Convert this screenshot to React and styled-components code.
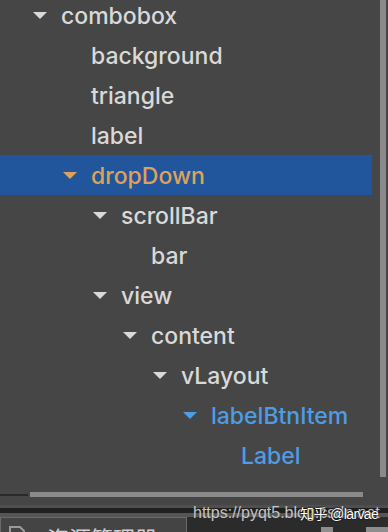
import React from "react";
import styled, { createGlobalStyle } from "styled-components";

const GlobalStyle = createGlobalStyle`
  html, body {
    margin: 0;
    padding: 0;
    background: #464646;
    overflow: hidden;
  }
`;

const nodes = [
  { name: "combobox", depth: 0, open: true },
  { name: "background", depth: 1 },
  { name: "triangle", depth: 1 },
  { name: "label", depth: 1 },
  { name: "dropDown", depth: 1, open: true, tone: "orange", selected: true },
  { name: "scrollBar", depth: 2, open: true },
  { name: "bar", depth: 3 },
  { name: "view", depth: 2, open: true },
  { name: "content", depth: 3, open: true },
  { name: "vLayout", depth: 4, open: true },
  { name: "labelBtnItem", depth: 5, open: true, tone: "blue" },
  { name: "Label", depth: 6, tone: "blue" }
];

const tones = {
  normal: "#d9d9d9",
  orange: "#dfa15a",
  blue: "#4d9de6"
};

const Page = styled.div`
  width: 388px;
  height: 532px;
  display: flex;
  flex-direction: column;
  background: #464646;
  position: relative;
  overflow: hidden;
`;

const Viewport = styled.div`
  height: 484px;
  flex-shrink: 0;
  display: flex;
  overflow: hidden;
`;

const TreeList = styled.ul`
  width: 372px;
  margin: -5px 0 0;
  padding: 0;
  list-style: none;
`;

const Row = styled.li`
  height: 40px;
  display: flex;
  align-items: center;
  padding-left: ${(p) => 33 + p.$depth * 30}px;
  background: ${(p) => (p.$selected ? "#21569c" : "transparent")};
  color: ${(p) => tones[p.$tone || "normal"]};
  font-family: Inter, "Liberation Sans", sans-serif;
  font-size: 23px;
  font-weight: 500;
`;

const Label = styled.span`
  margin-top: 2px;
`;

const ArrowSlot = styled.span`
  width: 14px;
  margin-right: 14px;
  display: flex;
  justify-content: center;
  align-items: center;
`;

const Arrow = styled.span`
  width: 0;
  height: 0;
  border-left: 7px solid transparent;
  border-right: 7px solid transparent;
  border-top: 7px solid ${(p) => tones[p.$tone || "normal"]};
`;

const Gutter = styled.div`
  flex: 1;
  display: flex;
  justify-content: flex-end;
`;

const VScroll = styled.div`
  width: 6px;
  height: 477px;
  margin-right: 2px;
  background: #8a8a8a;
`;

const HScrollArea = styled.div`
  height: 21px;
  flex-shrink: 0;
  display: flex;
  align-items: flex-start;
  padding-top: 8px;
  box-sizing: border-box;
`;

const HTrack = styled.div`
  width: 28px;
  height: 2px;
  margin-top: 2px;
  background: #2a2a2a;
`;

const HThumb = styled.div`
  margin-left: 2px;
  width: 333px;
  height: 5px;
  background: #8a8a8a;
`;

const Divider = styled.div`
  height: ${(p) => p.$h}px;
  flex-shrink: 0;
  background: ${(p) => p.$c};
`;

const TabBar = styled.div`
  flex: 1;
  min-height: 0;
  display: flex;
  background: #2b2b2b;
  overflow: hidden;
`;

const Tab = styled.div`
  width: 187px;
  flex-shrink: 0;
  border: 1px solid #6a6a6a;
  border-bottom: none;
  background: #444444;
  display: flex;
  align-items: flex-start;
  gap: 22px;
  padding: 8px 0 0 8px;
  box-sizing: border-box;
`;

const TabText = styled.span`
  font-family: "Noto Sans CJK SC", "Liberation Sans", sans-serif;
  font-size: 22px;
  line-height: 22px;
  color: #cfcfcf;
  white-space: nowrap;
`;

const TabTools = styled.div`
  flex: 1;
  display: flex;
  justify-content: flex-end;
  align-items: flex-start;
  gap: 33px;
  padding-top: 10px;
`;

const ToolSquare = styled.span`
  width: ${(p) => p.$w}px;
  height: 10px;
  background: #8d8d8d;
`;

const Watermark = styled.span`
  position: absolute;
  left: ${(p) => p.$x}px;
  top: ${(p) => p.$y}px;
  font-family: "Liberation Sans", "Noto Sans CJK SC", sans-serif;
  font-size: ${(p) => p.$size}px;
  letter-spacing: ${(p) => p.$spacing || 0}px;
  line-height: 1.15;
  color: ${(p) => p.$color};
  white-space: nowrap;
  text-shadow: ${(p) => (p.$shadow ? "0 0 2px #000, 0 0 1px #000" : "none")};
`;

function DocIcon() {
  return (
    <svg width="16" height="20" viewBox="0 0 16 20">
      <path d="M1 1h10l4 4v14H1z" fill="none" stroke="#9a9a9a" strokeWidth="2" />
    </svg>
  );
}

export default function App() {
  return (
    <Page>
      <GlobalStyle />
      <Viewport>
        <TreeList>
          {nodes.map((n) => (
            <Row key={n.name} $depth={n.depth} $tone={n.tone} $selected={n.selected}>
              <ArrowSlot>{n.open && <Arrow $tone={n.tone} />}</ArrowSlot>
              <Label>{n.name}</Label>
            </Row>
          ))}
        </TreeList>
        <Gutter>
          <VScroll />
        </Gutter>
      </Viewport>
      <HScrollArea>
        <HTrack />
        <HThumb />
      </HScrollArea>
      <Divider $h={3} $c="#4f4f4f" />
      <Divider $h={5} $c="#202020" />
      <Divider $h={4} $c="#555555" />
      <TabBar>
        <Tab>
          <DocIcon />
          <TabText>资源管理器</TabText>
        </Tab>
        <TabTools>
          <ToolSquare $w={12} />
          <ToolSquare $w={22} />
        </TabTools>
      </TabBar>
      <Watermark $x={193} $y={504} $size={16} $color="#c4c4c4">
        https://pyqt5.blog.csdn.net
      </Watermark>
      <Watermark $x={300} $y={506} $size={14} $spacing={-0.6} $color="#ffffff" $shadow>
        知乎 @larvae
      </Watermark>
    </Page>
  );
}
